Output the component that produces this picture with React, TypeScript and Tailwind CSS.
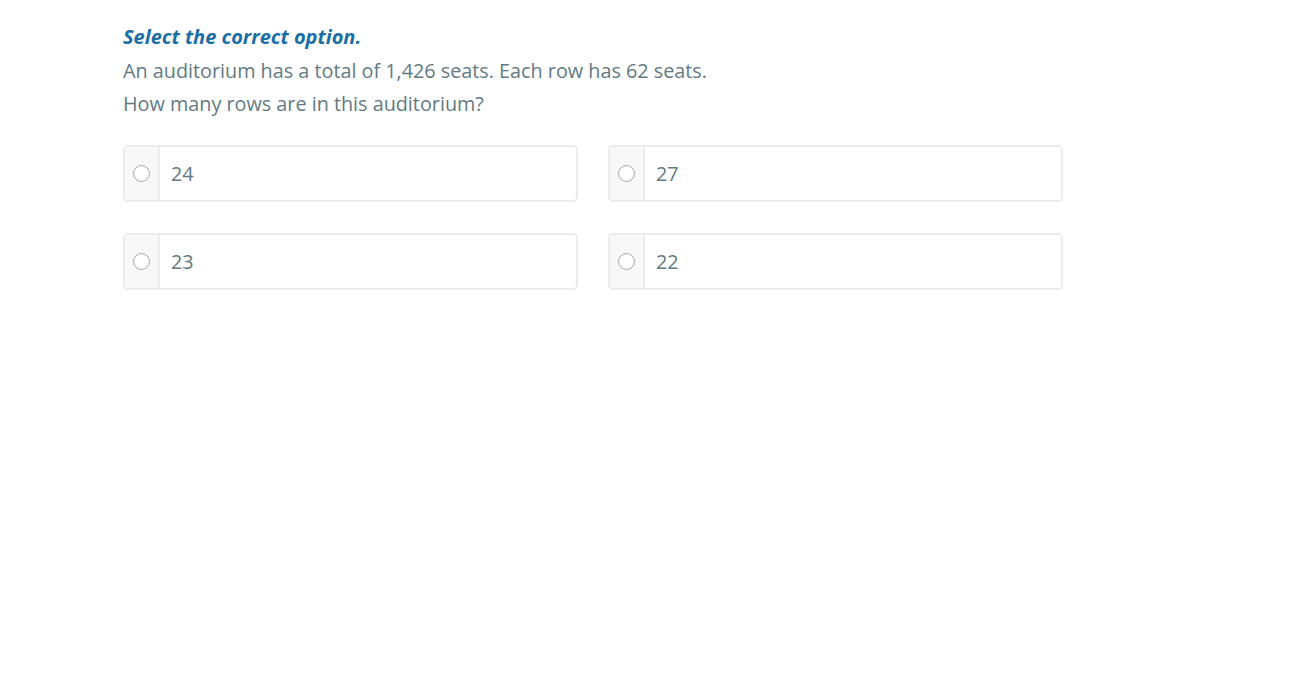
import React from 'react';

const options = ['24', '27', '23', '22'];

export default function App() {
  return (
    <div className="min-h-screen bg-white font-['Open_Sans',sans-serif]">
      <div className="pl-[123px] pt-[22px] w-[1063px]">
        <h1 className="text-[20px] leading-[30px] font-bold italic text-[#1a6ea6]">
          Select the correct option.
        </h1>
        <p className="mt-[2px] text-[19.8px] leading-[33px] text-[#627a84]">
          An auditorium has a total of 1,426 seats. Each row has 62 seats.
        </p>
        <p className="text-[19.8px] leading-[33px] text-[#627a84]">How many rows are in this auditorium?</p>

        <div className="mt-[25px] grid grid-cols-2 gap-x-[30px] gap-y-[31px]">
          {options.map((opt) => (
            <label
              key={opt}
              className="flex h-[57px] rounded-[5px] border-2 border-[#ececec] overflow-hidden cursor-pointer"
            >
              <span className="flex w-[35px] items-center justify-center bg-[#f8f8f8] border-r-2 border-[#ececec]">
                <span className="block w-[17px] h-[17px] rounded-full border border-[#a5a5a5] bg-white" />
              </span>
              <span className="flex items-center pl-[11px] text-[19.8px] text-[#627a84]">{opt}</span>
            </label>
          ))}
        </div>
      </div>
    </div>
  );
}
